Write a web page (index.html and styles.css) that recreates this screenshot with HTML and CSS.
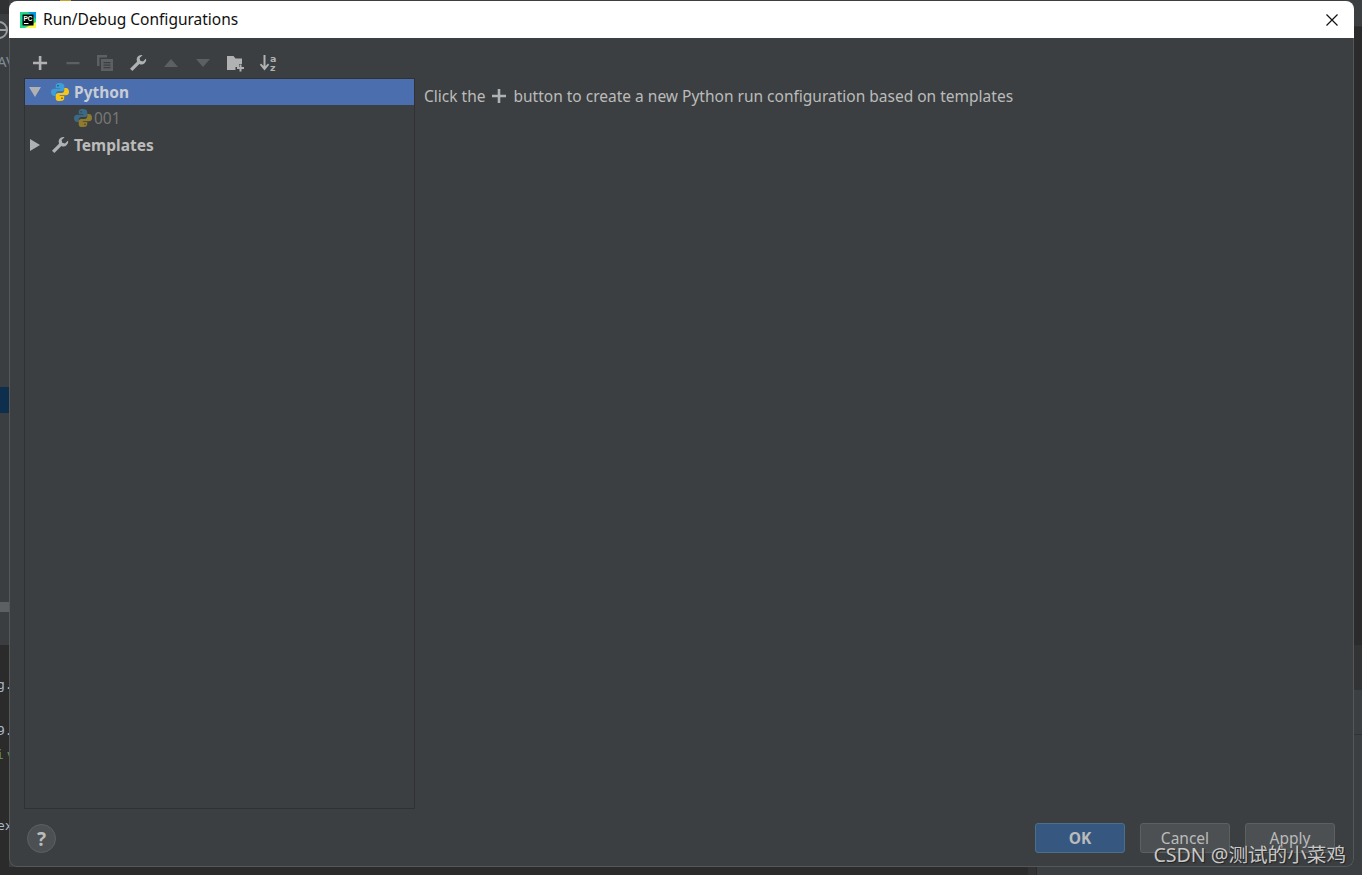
FILE: index.html
```html
<!DOCTYPE html>
<html lang="en">
<head>
<meta charset="utf-8">
<title>Run/Debug Configurations</title>
<link rel="stylesheet" href="styles.css">
</head>
<body>
<div class="ide">
  <div class="ide-left">
    <div class="bg-top"></div>
    <svg class="bg-glyph" width="20" height="20" viewBox="0 0 20 20"><circle cx="10" cy="10" r="8" fill="none" stroke="#9a9c9e" stroke-width="2"/><path d="M2 10h16M10 5v10" stroke="#9a9c9e" stroke-width="2" fill="none"/></svg>
    <div class="bg-av">AV</div>
    <div class="bg-sel"></div>
    <div class="bg-tab"></div>
    <div class="bg-console">
      <span class="c-g">g.</span>
      <span class="c-9">9.</span>
      <span class="c-i">i v</span>
      <span class="c-e">ex</span>
    </div>
  </div>
  <div class="ide-right">
    <div class="r-top"></div>
    <div class="r-editor"></div>
    <div class="r-mid"></div>
    <div class="r-low"></div>
  </div>
  <div class="ide-bottom"><div class="ide-bottom-dark"></div><div class="ide-bottom-mid"></div><div class="ide-bottom-light"></div></div>
  <div class="top-mark"></div>
</div>

<main class="dialog">
  <header class="titlebar">
    <svg class="pc-logo" width="16" height="16" viewBox="0 0 16 16">
      <rect width="16" height="16" fill="#21d789"/>
      <path d="M0 0h16v7L8 0z" fill="#009ae5"/>
      <path d="M16 16H5l11-6z" fill="#fcf84a"/>
      <rect x="2.500" y="2.500" width="11" height="11" fill="#000"/>
      <rect x="4" y="11" width="4.500" height="1" fill="#fff"/>
      <text x="3.500" y="8.800" class="pc-text">PC</text>
    </svg>
    <span class="title">Run/Debug Configurations</span>
    <svg class="close" width="12" height="12" viewBox="0 0 12 12"><path d="M.5.5l11 11M11.5.5l-11 11" stroke="#111" stroke-width="1.2" fill="none"/></svg>
  </header>

  <div class="body">
    <div class="toolbar">
      <svg class="tool" viewBox="0 0 18 18"><path d="M7.800 2h2.600v5.700h5.700v2.600h-5.700V16H7.800v-5.700H2V7.700h5.800z" fill="#afb1b3"/></svg>
      <svg class="tool" viewBox="0 0 18 18"><path d="M2.500 8h13v2.200h-13z" fill="#5d6062"/></svg>
      <svg class="tool" viewBox="0 0 18 18"><path d="M1 1h10v2.500H3.500V12H1z" fill="#5d6062"/><path d="M5 5h12v12H5z" fill="#5d6062"/><path d="M7.500 8h7v1.200h-7zM7.500 10.500h7v1.200h-7zM7.500 13h7v1.200h-7z" fill="#3c3f41"/></svg>
      <svg class="tool" viewBox="0 0 16 16"><path d="M11 .8a4.300 4.300 0 0 0-3.900 6L.9 13l2.100 2.100 6.200-6.200a4.300 4.300 0 0 0 6-5L12.400 6.600 10 6l-.6-2.400L12.100 1a4.300 4.300 0 0 0-1.100-.2z" fill="#afb1b3"/></svg>
      <svg class="tool" viewBox="0 0 18 18"><path d="M9 5l7 8H2z" fill="#5d6062"/></svg>
      <svg class="tool" viewBox="0 0 18 18"><path d="M9 13L2 5h14z" fill="#5d6062"/></svg>
      <svg class="tool" viewBox="0 0 18 18"><path d="M0 2h6.500l2 2.500H15V10h-3v3H8.500v3H0z" fill="#afb1b3"/><path d="M12.500 10.500h2v2.500H17v2h-2.500v2.500h-2V15H10v-2h2.500z" fill="#afb1b3"/></svg>
      <svg class="tool" viewBox="0 0 18 18"><path d="M3.500 1h2v11l2.500-2.500 1.200 1.200L4.500 16.500-.2 10.700 1 9.500l2.500 2.500z" fill="#afb1b3"/><text x="10" y="8" class="sort-text">a</text><text x="10" y="17" class="sort-text">z</text></svg>
    </div>

    <div class="content">
      <aside class="tree">
        <div class="row row-selected">
          <svg class="arrow" width="12" height="12" viewBox="0 0 12 12"><path d="M0 1h12L6 11z" fill="#afb1b3"/></svg>
          <svg class="py" width="18" height="18" viewBox="0 0 18 18"><use href="#python"/></svg>
          <span class="label bold">Python</span>
        </div>
        <div class="row row-child">
          <svg class="py dim" width="18" height="18" viewBox="0 0 18 18"><use href="#python"/></svg>
          <span class="label muted">001</span>
        </div>
        <div class="row">
          <svg class="arrow" width="12" height="12" viewBox="0 0 12 12"><path d="M1 0l10 6-10 6z" fill="#afb1b3"/></svg>
          <svg class="wrench" width="18" height="18" viewBox="0 0 16 16"><path d="M11 .8a4.300 4.300 0 0 0-3.900 6L.9 13l2.100 2.100 6.200-6.200a4.300 4.300 0 0 0 6-5L12.400 6.600 10 6l-.6-2.400L12.100 1a4.300 4.300 0 0 0-1.100-.2z" fill="#afb1b3"/></svg>
          <span class="label bold">Templates</span>
        </div>
      </aside>
      <section class="hint">
        <span>Click the</span>
        <svg class="hint-plus" width="14" height="14" viewBox="0 0 14 14"><path d="M5.700 0h2.600v5.700H14v2.600H8.300V14H5.700V8.300H0V5.700h5.700z" fill="#afb1b3"/></svg>
        <span>button to create a new Python run configuration based on templates</span>
      </section>
    </div>

    <footer class="footer">
      <div class="help">?</div>
      <div class="buttons">
        <div class="btn btn-primary">OK</div>
        <div class="btn">Cancel</div>
        <div class="btn">Apply</div>
      </div>
    </footer>
  </div>
</main>

<div class="watermark">CSDN @测试的小菜鸡</div>

<svg class="defs" width="0" height="0">
  <defs>
    <g id="python">
      <path d="M8.800 0C4.800 0 4.800 1.800 4.800 3.200V5h4.400v.8H3.200C1.200 5.800 0 7 0 9.100s1.200 3.800 3 3.800h1.700v-2.100c0-1.500 1.200-2.700 2.700-2.700h3.500c1.300 0 2.400-1.100 2.400-2.400V3.200C13.300 1.500 12 0 8.800 0z" fill="#3c9fd6"/>
      <path d="M9.200 18c4 0 4-1.800 4-3.200V13H8.800v-.8h6c2 0 3.200-1.200 3.200-3.300s-1.200-3.800-3-3.800h-1.700v2.100c0 1.500-1.200 2.700-2.700 2.700H7.100c-1.300 0-2.400 1.100-2.400 2.400v2.900c0 1.700 1.300 3.200 4.500 3.200z" fill="#f5c518"/>
      <circle cx="7" cy="2.700" r=".8" fill="#3c3f41"/>
      <circle cx="11" cy="15.300" r=".8" fill="#3c3f41"/>
    </g>
  </defs>
</svg>
</body>
</html>
```

FILE: styles.css
```css
* { box-sizing: border-box; }
html, body { margin: 0; padding: 0; width: 1362px; height: 875px; overflow: hidden; background: #3c3f41; }
body { font-family: "Noto Sans", "Open Sans", sans-serif; position: relative; }

.ide { position: absolute; inset: 0; }
.ide-left { position: absolute; left: 0; top: 0; width: 9px; height: 875px; background: #3b3e40; overflow: hidden; }
.bg-top { position: absolute; left: 0; top: 0; width: 9px; height: 14px; background: #2f3133; }
.bg-glyph { position: absolute; left: -11px; top: 20px; }
.bg-av { position: absolute; left: -3px; top: 52px; color: #7d8a96; font-size: 15px; line-height: 18px; }
.bg-sel { position: absolute; left: 0; top: 387px; width: 9px; height: 26px; background: #0d2f4d; }
.bg-tab { position: absolute; left: 0; top: 602px; width: 9px; height: 10px; background: #5d6062; }
.bg-console { position: absolute; left: 0; top: 645px; width: 9px; height: 230px; background: #2b2b2b; font-family: "DejaVu Sans Mono", monospace; font-size: 13px; color: #a9b7c6; }
.bg-console span { position: absolute; left: -3px; white-space: nowrap; line-height: 14px; }
.c-g { top: 33px; }
.c-9 { top: 79px; }
.bg-console .c-i { top: 103px; left: -4px; color: #6a9955; word-spacing: -5px; }
.c-e { top: 174px; }

.ide-right { position: absolute; left: 1354px; top: 0; width: 8px; height: 875px; background: #3c3f41; display: flex; flex-direction: column; }
.r-top { height: 27px; flex: none; background: #3c3f41; border-bottom: 1px solid #323232; }
.r-editor { height: 618px; flex: none; background: #2b2b2b; }
.r-mid { height: 45px; flex: none; background: #313335; }
.r-low { height: 45px; flex: none; border-bottom: 1px solid #323232; }

.ide-bottom { position: absolute; left: 0; right: 0; bottom: 0; height: 8px; display: flex; }
.ide-bottom-dark { width: 1028px; background: #2b2b2b; }
.ide-bottom-mid { width: 9px; background: #313335; border-right: 1px solid #2b2b2b; }
.ide-bottom-light { flex: 1; background: #3c3f41; }
.top-mark { position: absolute; left: 60px; top: 0; width: 11px; height: 1px; background: #c9a227; }

.dialog { position: absolute; left: 9px; top: 1px; width: 1345px; height: 866px; border-radius: 8px; overflow: hidden; display: flex; flex-direction: column; background: #3c3f41; }
.titlebar { height: 37px; background: #fff; display: flex; align-items: center; padding: 0 16px 0 11px; flex: none; }
.pc-logo { flex: none; }
.pc-text { font-family: "Liberation Sans", sans-serif; font-size: 6.500px; font-weight: 700; fill: #fff; }
.title { margin: 0 0 2px 7px; font-size: 15.500px; color: #111; flex: 1; }
.close { flex: none; }

.body { flex: 1; display: flex; flex-direction: column; padding: 0 16px 0 14px; min-height: 0; border: 1px solid #555759; border-top: 0; border-radius: 0 0 8px 8px; }
.toolbar { height: 40px; display: flex; align-items: center; gap: 14.700px; padding-left: 7px; padding-top: 9px; flex: none; }
.tool { width: 18px; height: 18px; flex: none; overflow: visible; }
.sort-text { font-family: "DejaVu Sans", sans-serif; font-size: 9.500px; font-weight: 700; fill: #afb1b3; }

.content { display: flex; height: 731px; flex: none; }
.tree { width: 391px; flex: none; border: 1px solid #2f3133; }
.row { height: 26.500px; display: flex; align-items: center; padding-left: 4px; color: #bbb; font-size: 15.500px; }
.row-selected { height: 26px; background: #4b6eaf; }
.row-child { padding-left: 49px; }
.arrow { flex: none; }
.py { flex: none; margin-left: 10px; }
.wrench { flex: none; margin-left: 10px; }
.row-child .py { margin-left: 0; }
.dim { opacity: .45; }
.label { margin-left: 5px; }
.row-child .label { margin-left: 2px; }
.bold { font-weight: 700; }
.row-selected .bold { color: #c8ccd4; }
.muted { color: #777; }

.hint { flex: 1; display: flex; align-items: flex-start; padding: 8px 0 0 9px; color: #bbb; font-size: 15.500px; line-height: 20px; }
.hint-plus { margin: 3px 7px 0 7px; flex: none; }

.footer { flex: 1; display: flex; align-items: flex-start; justify-content: space-between; padding: 14px 2px 0 3px; }
.help { width: 29px; height: 29px; margin-top: 1px; border-radius: 50%; background: #4c5052; border: 1px solid #5e6060; color: #bbb; font-weight: 700; font-size: 19px; display: flex; align-items: center; justify-content: center; }
.buttons { display: flex; gap: 15px; }
.btn { width: 90px; height: 30px; background: #4c5052; border: 1px solid #5e6060; border-radius: 3px; color: #bbb; font-size: 15.500px; display: flex; align-items: center; justify-content: center; }
.btn-primary { background: #365880; border-color: #4c708c; font-weight: 700; }

.watermark { position: absolute; right: 16px; top: 843px; font-family: "Noto Sans", "Noto Sans CJK SC", sans-serif; font-size: 19.600px; line-height: 24px; color: #c8c8c8; text-shadow: 1px 1px 1px #222; white-space: nowrap; }
.defs { position: absolute; }
```
